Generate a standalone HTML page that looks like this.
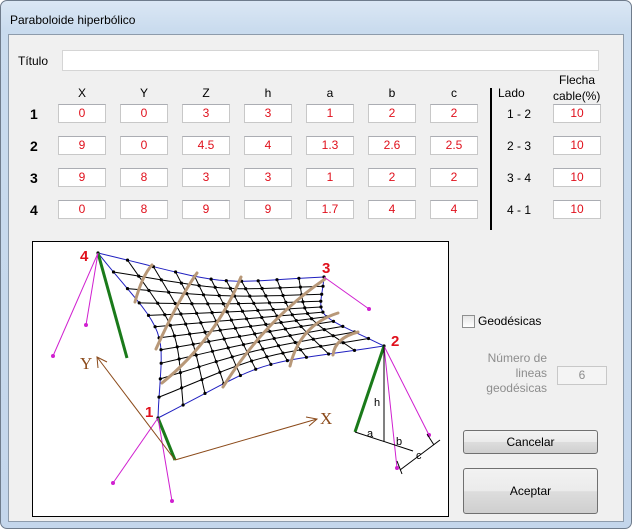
<!DOCTYPE html>
<html><head><meta charset="utf-8"><style>
body{margin:0;width:632px;height:529px;overflow:hidden;background:#fff;font-family:"Liberation Sans",sans-serif;}
.win{position:absolute;left:0;top:0;width:630px;height:527px;border:1px solid #6f7c8c;border-radius:7px;background:linear-gradient(#dbe7f4,#c9dbee 30px,#c4d6eb);}
.panel{position:absolute;left:8px;top:34px;width:614px;height:486px;background:#f0f0f0;border:1px solid #8d9bab;}
.t{position:absolute;font-size:12px;color:#000;}
.in{position:absolute;width:46px;height:17px;background:#fff;border:1px solid #c8c8c8;border-top-color:#abadb3;color:#e0101c;font-size:12px;text-align:center;line-height:17px;}
.rl{position:absolute;font-size:14px;font-weight:bold;}
.btn{position:absolute;border:1px solid #707070;border-radius:3px;background:linear-gradient(#f2f2f2,#ebebeb 50%,#dddddd 51%,#cfcfcf);text-align:center;font-size:12px;}
</style></head><body>
<div class="win"></div>
<div class="t" style="left:10px;top:13px;">Paraboloide hiperbólico</div>
<div class="panel"></div>
<div class="t" style="left:18px;top:54px;">Título</div>
<div style="position:absolute;left:62px;top:50px;width:535px;height:19px;background:#fff;border:1px solid #d5d5d5;"></div>
<div id="grid"></div>
<div style="position:absolute;left:490px;top:88px;width:2px;height:142px;background:#000;"></div>
<div class="t" style="left:498px;top:86px;">Lado</div>
<div class="t" style="left:559px;top:73px;">Flecha</div>
<div class="t" style="left:553px;top:89px;">cable(%)</div>
<div style="position:absolute;left:32px;top:241px;width:415px;height:274px;background:#fff;border:1px solid #000;"></div>
<svg style="position:absolute;left:0;top:0" width="632" height="529" id="sv">
<g id="mesh"></g>
<g fill="none" stroke="#b89878" stroke-width="3" stroke-linecap="round">
<path d="M135 302 Q142 276 152 265"/>
<path d="M156 349 Q178 300 197 273"/>
<path d="M162 383 Q215 340 241 277"/>
<path d="M223 387 Q265 320 325 279"/>
<path d="M290 366 Q300 325 338 313"/>
<path d="M333 355 Q335 338 358 332"/>
</g>
<g stroke="#1a7a1a" stroke-width="3"><line x1="98" y1="253" x2="127" y2="358"/><line x1="158" y1="418" x2="175" y2="460"/><line x1="384" y1="346" x2="355" y2="432"/></g>
<g stroke="#d020d0" stroke-width="1" fill="#d020d0">
<line x1="98" y1="253" x2="53" y2="356"/><line x1="98" y1="253" x2="86" y2="325"/><line x1="324" y1="277" x2="369" y2="309"/>
<line x1="158" y1="418" x2="113" y2="483"/><line x1="158" y1="418" x2="172" y2="501"/><line x1="384" y1="346" x2="397" y2="468"/><line x1="384" y1="346" x2="429" y2="435"/>
<circle cx="53" cy="356" r="1.5"/><circle cx="86" cy="325" r="1.5"/><circle cx="369" cy="309" r="1.5"/><circle cx="113" cy="483" r="1.5"/><circle cx="172" cy="501" r="1.5"/><circle cx="397" cy="468" r="1.5"/><circle cx="429" cy="435" r="1.5"/>
</g>
<g stroke="#8b4a1a" fill="none"><line x1="175" y1="460" x2="317" y2="419"/><path d="M306 417 L317 419 L309 426"/><line x1="175" y1="460" x2="97" y2="357"/><path d="M98 368 L97 357 L107 362"/></g>
<text x="320" y="424" font-family="Liberation Serif" font-size="17" fill="#8b4a1a">X</text>
<text x="80" y="369" font-family="Liberation Serif" font-size="17" fill="#8b4a1a">Y</text>
<g stroke="#000"><line x1="384" y1="346" x2="384" y2="442"/><line x1="355" y1="432" x2="413" y2="451"/><line x1="400" y1="470" x2="440" y2="440"/><line x1="397" y1="461" x2="402" y2="474"/><line x1="427" y1="434" x2="434" y2="445"/></g>
<g font-size="11" fill="#000"><text x="374" y="406">h</text><text x="367" y="437">a</text><text x="396" y="445">b</text><text x="416" y="459">c</text></g>
<g font-size="15" font-weight="bold" fill="#e0101c"><text x="80" y="261">4</text><text x="322" y="273">3</text><text x="391" y="346">2</text><text x="145" y="417">1</text></g>
</svg>
<div style="position:absolute;left:462px;top:315px;width:11px;height:11px;border:1px solid #8e8f8f;background:linear-gradient(#e6e6e6,#fff);"></div>
<div class="t" style="left:478px;top:314px;">Geodésicas</div>
<div class="t" style="left:470px;top:351px;width:77px;text-align:right;color:#8d8d8d;line-height:15px;">Número de<br>lineas<br>geodésicas</div>
<div style="position:absolute;left:557px;top:366px;width:48px;height:17px;border:1px solid #c8c8c8;background:#f4f4f4;color:#8d8d8d;font-size:12px;text-align:center;line-height:17px;">6</div>
<div class="btn" style="left:463px;top:430px;width:133px;height:22px;line-height:22px;">Cancelar</div>
<div class="btn" style="left:463px;top:468px;width:133px;height:44px;line-height:44px;">Aceptar</div>
<script>
var g=document.getElementById('grid'),h='';
var cols=['X','Y','Z','h','a','b','c'],xs=[58,120,182,244,306,368,430];
var vals=[['0','0','3','3','1','2','2'],['9','0','4.5','4','1.3','2.6','2.5'],['9','8','3','3','1','2','2'],['0','8','9','9','1.7','4','4']];
var ys=[104,136,168,200];
for(var i=0;i<7;i++)h+='<div class="t" style="left:'+xs[i]+'px;width:48px;text-align:center;top:86px">'+cols[i]+'</div>';
for(var r=0;r<4;r++){h+='<div class="rl" style="left:30px;top:'+(ys[r]+2)+'px">'+(r+1)+'</div>';
for(var i=0;i<7;i++)h+='<div class="in" style="left:'+xs[i]+'px;top:'+ys[r]+'px">'+vals[r][i]+'</div>';
h+='<div class="t" style="left:507px;top:'+(ys[r]+3)+'px">'+['1 - 2','2 - 3','3 - 4','4 - 1'][r]+'</div>';
h+='<div class="in" style="left:553px;top:'+ys[r]+'px">10</div>';}
g.innerHTML=h;
var c1=[158,418],c2=[384,346],c3=[324,277],c4=[98,253],cx=241,cy=323;
function P(u,v){var x=(1-u)*(1-v)*c1[0]+u*(1-v)*c2[0]+u*v*c3[0]+(1-u)*v*c4[0];var y=(1-u)*(1-v)*c1[1]+u*(1-v)*c2[1]+u*v*c3[1]+(1-u)*v*c4[1];
var su=Math.sin(Math.PI*u),sv=Math.sin(Math.PI*v);var kk=0.26*(su+sv)-0.26*su*sv;
return [x+(cx-x)*kk,y+(cy-y)*kk];}
var s='',N=11;
for(var a=0;a<=N;a++){var d1='',d2='';for(var b=0;b<=20;b++){var p=P(a/N,b/20),q=P(b/20,a/N);d1+=(b?'L':'M')+p[0].toFixed(1)+' '+p[1].toFixed(1);d2+=(b?'L':'M')+q[0].toFixed(1)+' '+q[1].toFixed(1);}
var col=(a==0||a==N)?'#2020c0':'#000';s+='<path d="'+d1+'" stroke="'+col+'" fill="none"/><path d="'+d2+'" stroke="'+col+'" fill="none"/>';}
for(var a=0;a<=N;a++)for(var b=0;b<=N;b++){var p=P(a/N,b/N);s+='<circle cx="'+p[0].toFixed(1)+'" cy="'+p[1].toFixed(1)+'" r="1.6" fill="#000"/>';}
document.getElementById('mesh').innerHTML=s;
</script>
</body></html>
